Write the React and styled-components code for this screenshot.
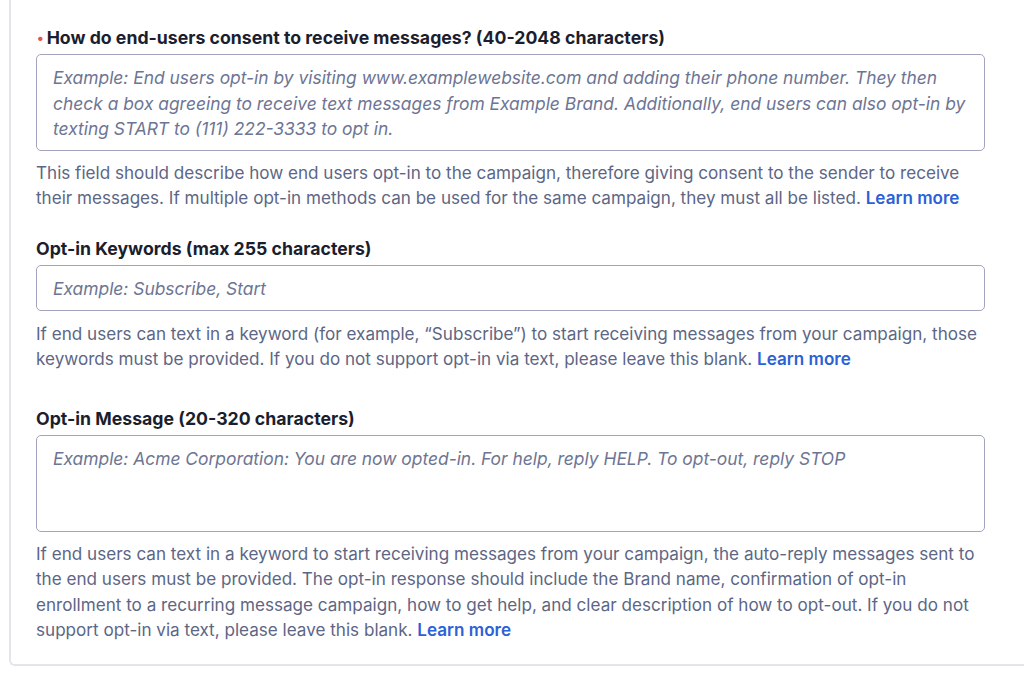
import React from "react";
import styled, { createGlobalStyle } from "styled-components";

const GlobalStyle = createGlobalStyle`
  body {
    margin: 0;
    background: #ffffff;
    overflow: hidden;
    font-family: Inter, "Noto Sans", sans-serif;
    -webkit-font-smoothing: antialiased;
  }
`;

const Card = styled.div`
  margin-left: 9px;
  width: 1040px;
  border: 2px solid #e4e5eb;
  border-top: none;
  border-bottom-left-radius: 6px;
  padding: 26px 0 22px 25px;
  box-sizing: border-box;
`;

const Form = styled.div`
  width: 949px;
  display: flex;
  flex-direction: column;
`;

const Field = styled.div`
  display: flex;
  flex-direction: column;
  margin-top: ${(p) => p.$gap || 0}px;
`;

const Label = styled.div`
  font-size: 17.7px;
  line-height: 24px;
  font-weight: 700;
  color: #1b1e2e;
  margin-bottom: 4px;
  display: flex;
  align-items: center;
`;

const Required = styled.span`
  color: #e0584d;
  font-size: 14px;
  margin: 0 3px 0 1px;
`;

const Box = styled.div`
  height: ${(p) => p.$height}px;
  border: 1px solid #a0a5bd;
  border-radius: 5px;
  padding: 10px 16px;
  box-sizing: border-box;
  font-size: 17.4px;
  line-height: 25.5px;
  font-style: italic;
  color: #6d7594;
`;

const Help = styled.p`
  margin: ${(p) => p.$top || 9}px 0 0;
  font-size: 17.1px;
  line-height: 25.3px;
  color: #5c6685;
`;

const Link = styled.a`
  color: #2c61d6;
  font-weight: 600;
  text-decoration: none;
`;

export default function App() {
  return (
    <>
      <GlobalStyle />
      <Card>
        <Form>
          <Field>
            <Label>
              <Required>•</Required>How do end-users consent to receive messages? (40-2048 characters)
            </Label>
            <Box $height={97}>
              Example: End users opt-in by visiting www.examplewebsite.com and adding their phone number. They then
              check a box agreeing to receive text messages from Example Brand. Additionally, end users can also opt-in by
              texting START to (111) 222-3333 to opt in.
            </Box>
            <Help>
              This field should describe how end users opt-in to the campaign, therefore giving consent to the sender to receive
              their messages. If multiple opt-in methods can be used for the same campaign, they must all be listed.{" "}
              <Link href="#">Learn more</Link>
            </Help>
          </Field>
          <Field $gap={26}>
            <Label>Opt-in Keywords (max 255 characters)</Label>
            <Box $height={46}>Example: Subscribe, Start</Box>
            <Help $top={10}>
              If end users can text in a keyword (for example, “Subscribe”) to start receiving messages from your campaign, those
              keywords must be provided. If you do not support opt-in via text, please leave this blank.{" "}
              <Link href="#">Learn more</Link>
            </Help>
          </Field>
          <Field $gap={36}>
            <Label>Opt-in Message (20-320 characters)</Label>
            <Box $height={97}>
              Example: Acme Corporation: You are now opted-in. For help, reply HELP. To opt-out, reply STOP
            </Box>
            <Help $top={9}>
              If end users can text in a keyword to start receiving messages from your campaign, the auto-reply messages sent to
              the end users must be provided. The opt-in response should include the Brand name, confirmation of opt-in
              enrollment to a recurring message campaign, how to get help, and clear description of how to opt-out. If you do not
              support opt-in via text, please leave this blank. <Link href="#">Learn more</Link>
            </Help>
          </Field>
        </Form>
      </Card>
    </>
  );
}
